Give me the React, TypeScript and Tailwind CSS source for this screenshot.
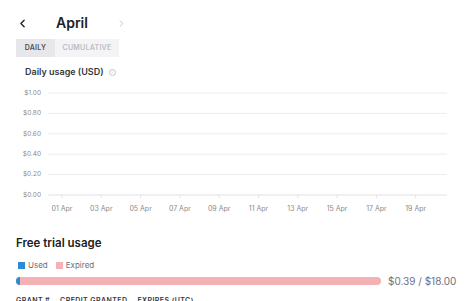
import { ChevronLeft, ChevronRight } from "lucide-react";

const yTicks = ["$1.00", "$0.80", "$0.60", "$0.40", "$0.20", "$0.00"];
const xTicks = ["01 Apr", "03 Apr", "05 Apr", "07 Apr", "09 Apr", "11 Apr", "13 Apr", "15 Apr", "17 Apr", "19 Apr"];

const UsageChart = () => {
  const top = 8;
  const step = 20.4;
  const bottom = top + step * 5;
  return (
    <svg width="442" height="133" className="block" style={{ fontFamily: "Inter, sans-serif" }}>
      {yTicks.map((label, i) => {
        const y = top + step * i;
        return (
          <g key={label}>
            <line x1="32" x2="431" y1={y} y2={y} stroke={i === 5 ? "#e2e2e2" : "#ececec"} strokeWidth="1" />
            <text x="25" y={y} textAnchor="end" dominantBaseline="middle" fontSize="6.5" fill="#8a8a8a">
              {label}
            </text>
          </g>
        );
      })}
      {xTicks.map((label, i) => {
        const x = 46 + 39.3 * i;
        return (
          <g key={label}>
            <line x1={x} x2={x} y1={bottom} y2={bottom + 3} stroke="#e2e2e2" strokeWidth="1" />
            <text x={x} y={124} textAnchor="middle" dominantBaseline="middle" fontSize="7" fill="#8a8a8a">
              {label}
            </text>
          </g>
        );
      })}
    </svg>
  );
};

export default function App() {
  return (
    <div className="w-[474px] bg-white px-4 pt-3 font-['Inter',sans-serif] text-[#202123]">
      {/* month switcher */}
      <div className="flex h-[22px] items-center">
        <ChevronLeft size={13} strokeWidth={2.5} />
        <span className="ml-[27px] text-[14px] font-semibold leading-none">April</span>
        <ChevronRight size={11} strokeWidth={2} className="ml-[28px] text-[#c2c2c2]" />
      </div>

      {/* tabs */}
      <div className="mt-[5px] flex h-[18px] w-[103px] bg-[#f4f4f6] text-[7px] font-semibold tracking-[0.04em]">
        <div className="flex w-[39px] items-center justify-center bg-[#e7e7eb] text-[#505050]">DAILY</div>
        <div className="flex flex-1 items-center justify-center text-[#bdbdbd]">CUMULATIVE</div>
      </div>

      <div className="mt-[9px] ml-[9px] flex h-[12px] items-center gap-[5px]">
        <span className="text-[9px] font-semibold leading-[12px] text-[#353740]">Daily usage (USD)</span>
        <span className="flex h-[7px] w-[7px] items-center justify-center rounded-full border border-[#c5c5c5] text-[5px] leading-none text-[#c5c5c5]">
          i
        </span>
      </div>

      <div className="mt-[7px]">
        <UsageChart />
      </div>

      <div className="mt-[17px] text-[11.5px] font-semibold leading-[16px]">Free trial usage</div>

      <div className="mt-[9px] ml-[2px] flex h-[10px] items-center text-[8px] text-[#6e6e80]">
        <span className="mr-[3px] h-[7px] w-[7px] bg-[#2c8cd3]" />
        <span>Used</span>
        <span className="ml-[8px] mr-[3px] h-[7px] w-[7px] bg-[#f4b1b6]" />
        <span>Expired</span>
      </div>

      <div className="mt-[7px] flex h-[8px] items-center">
        <div className="flex h-[8px] w-[365px] overflow-hidden rounded-full bg-[#f4b1b6]">
          <div className="h-full w-[4px] bg-[#2c8cd3]" />
        </div>
        <span className="ml-[7px] text-[10px] leading-none text-[#6e6e80]">$0.39 / $18.00</span>
      </div>

      <div className="mt-[11px] flex h-[12px] items-start gap-[10px] text-[7px] font-semibold uppercase tracking-[0.06em] text-[#353740]">
        <span>Grant #</span>
        <span>Credit granted</span>
        <span>Expires (UTC)</span>
      </div>
      <div className="h-[40px]" />
    </div>
  );
}
